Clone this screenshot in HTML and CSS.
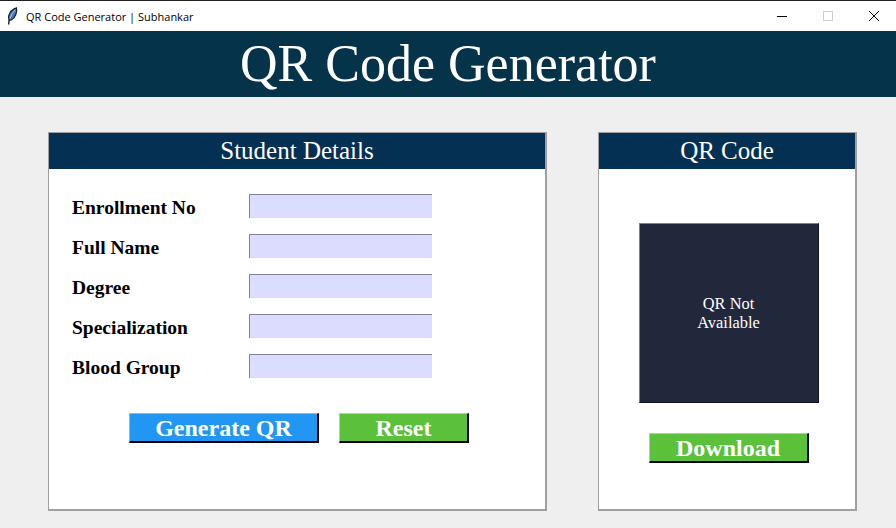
FILE: index.html
```html
<!DOCTYPE html>
<html lang="en">
<head>
  <meta charset="UTF-8" />
  <title>QR Code Generator | Subhankar</title>
  <link rel="stylesheet" href="styles.css">
</head>
<body>
  <!-- Window title bar -->
  <div class="titlebar">
    <svg class="feather" width="16" height="18" viewBox="0 0 16 18">
      <path d="M3.6 17.5 C3.8 15 4 13.5 4.5 12" stroke="#111" stroke-width="1.3" fill="none"/>
      <path d="M4.2 13 C2.2 9 5 3 11.5 0.8 C12.5 5 10.5 11 6 13.2 Z" fill="#4478bb" stroke="#0e1c2a" stroke-width="1.1"/>
      <path d="M5 11.5 C6.2 8 8 5 10 3" stroke="#c4d9f0" stroke-width="0.8" fill="none"/>
    </svg>
    <span class="window-title">QR Code Generator | Subhankar</span>
    <div class="window-buttons">
      <svg class="win-btn" width="46" height="30" viewBox="0 0 46 30"><path d="M18 15.5 H28" stroke="#000" stroke-width="1"/></svg>
      <svg class="win-btn" width="46" height="30" viewBox="0 0 46 30"><rect x="18.5" y="10.5" width="9" height="9" fill="none" stroke="#ccc" stroke-width="1"/></svg>
      <svg class="win-btn" width="46" height="30" viewBox="0 0 46 30"><path d="M18 10 L28 20 M28 10 L18 20" stroke="#000" stroke-width="1"/></svg>
    </div>
  </div>

  <!-- Big heading -->
  <div class="banner">QR Code Generator</div>

  <div class="content">
    <!-- Student form -->
    <div class="panel panel-form">
      <div class="panel-title">Student Details</div>
      <div class="form-rows">
        <div class="row"><label class="field-label">Enrollment No</label><input class="field" type="text"></div>
        <div class="row"><label class="field-label">Full Name</label><input class="field" type="text"></div>
        <div class="row"><label class="field-label">Degree</label><input class="field" type="text"></div>
        <div class="row"><label class="field-label">Specialization</label><input class="field" type="text"></div>
        <div class="row"><label class="field-label">Blood Group</label><input class="field" type="text"></div>
      </div>
      <div class="form-actions">
        <button class="btn btn-blue btn-generate">Generate QR</button>
        <button class="btn btn-green btn-reset">Reset</button>
      </div>
    </div>

    <!-- QR preview -->
    <div class="panel panel-qr">
      <div class="panel-title">QR Code</div>
      <div class="qr-body">
        <div class="qr-box">QR Not<br>Available</div>
        <button class="btn btn-green btn-download">Download</button>
      </div>
    </div>
  </div>
</body>
</html>
```

FILE: styles.css
```css
* {
  box-sizing: border-box;
  margin: 0;
  padding: 0;
}
html, body {
  width: 896px;
  height: 528px;
  background: #efefef;
  overflow: hidden;
  font-family: "Liberation Serif", serif;
}

/* Title bar */
.titlebar {
  height: 31px;
  display: flex;
  align-items: center;
  background: #fff;
  border-top: 1px solid #222;
  padding-left: 5px;
}
.feather {
  margin-right: 5px;
}
.window-title {
  font-family: "Open Sans", sans-serif;
  font-size: 11px;
  color: #000;
}
.window-buttons {
  margin-left: auto;
  display: flex;
  margin-right: -1px;
}
.win-btn {
  display: block;
}

/* Heading band */
.banner {
  height: 66px;
  background: #05344a;
  color: #fff;
  font-size: 52px;
  line-height: 66px;
  text-align: center;
}

/* Panels */
.content {
  display: flex;
  align-items: flex-start;
  gap: 51px;
  padding: 35px 0 0 48px;
}
.panel {
  height: 379px;
  background: #fff;
  border: 1px solid #a0a0a0;
  border-right-width: 2px;
  border-bottom-width: 2px;
}
.panel-form {
  width: 499px;
}
.panel-qr {
  width: 259px;
}
.panel-title {
  height: 36px;
  background: #033053;
  color: #fff;
  font-size: 25px;
  line-height: 36px;
  text-align: center;
}

/* Form */
.form-rows {
  display: flex;
  flex-direction: column;
  gap: 16px;
  padding: 25px 0 0 23px;
}
.row {
  display: flex;
  align-items: center;
  height: 24px;
}
.field-label {
  width: 177px;
  padding-top: 4px;
  font-size: 19.5px;
  font-weight: bold;
  color: #000;
}
.field {
  width: 183px;
  height: 24px;
  background: #dcdcff;
  border: none;
  border-top: 1px solid #82829a;
  border-left: 1px solid #82829a;
}
.form-actions {
  display: flex;
  gap: 20px;
  padding: 35px 0 0 80px;
}

/* Buttons */
.btn {
  height: 30px;
  color: #fff;
  font-family: "Liberation Serif", serif;
  font-size: 24px;
  font-weight: bold;
  line-height: 26px;
  border-style: solid;
  border-width: 1px 2px 2px 1px;
  border-right-color: #000;
  border-bottom-color: #000;
}
.btn-blue {
  background: #2196f3;
  border-top-color: #7cc0f8;
  border-left-color: #7cc0f8;
}
.btn-green {
  background: #5bc03a;
  border-top-color: #9ae484;
  border-left-color: #9ae484;
}
.btn-generate {
  width: 190px;
}
.btn-reset {
  width: 130px;
}
.btn-download {
  width: 160px;
}

/* QR preview */
.qr-body {
  display: flex;
  flex-direction: column;
  align-items: center;
  padding: 54px 0 0 3px;
  gap: 30px;
}
.qr-box {
  width: 180px;
  height: 180px;
  display: flex;
  align-items: center;
  justify-content: center;
  text-align: center;
  background: #22283c;
  border-top: 1px solid #80808c;
  border-left: 1px solid #80808c;
  border-right: 1px solid #101420;
  border-bottom: 1px solid #101420;
  color: #fff;
  font-size: 16.4px;
  line-height: 19px;
}
```
